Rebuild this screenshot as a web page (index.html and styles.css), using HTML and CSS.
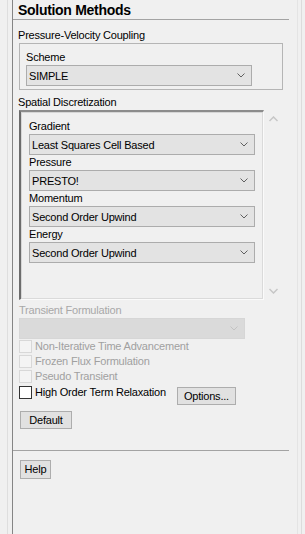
FILE: index.html
```html
<!DOCTYPE html>
<html>
<head lang="en">
    <meta charset="UTF-8">
    <title>Solution Methods</title>
    <link rel="stylesheet" href="styles.css">
</head>
<body>
    <div id="window">
        <div id="panel">
            <div class="title">Solution Methods</div>

            <div class="section">Pressure-Velocity Coupling</div>
            <div class="group">
                <div class="label">Scheme</div>
                <div class="select">
                    <span>SIMPLE</span>
                    <svg class="arrow" width="8" height="5" viewBox="0 0 8 5"><polyline points="0.5,0.5 4,4 7.5,0.5"/></svg>
                </div>
            </div>

            <div class="section second">Spatial Discretization</div>
            <div class="scroller">
                <div class="frame">
                    <div class="label">Gradient</div>
                    <div class="select">
                        <span>Least Squares Cell Based</span>
                        <svg class="arrow" width="8" height="5" viewBox="0 0 8 5"><polyline points="0.5,0.5 4,4 7.5,0.5"/></svg>
                    </div>
                    <div class="label">Pressure</div>
                    <div class="select">
                        <span>PRESTO!</span>
                        <svg class="arrow" width="8" height="5" viewBox="0 0 8 5"><polyline points="0.5,0.5 4,4 7.5,0.5"/></svg>
                    </div>
                    <div class="label">Momentum</div>
                    <div class="select">
                        <span>Second Order Upwind</span>
                        <svg class="arrow" width="8" height="5" viewBox="0 0 8 5"><polyline points="0.5,0.5 4,4 7.5,0.5"/></svg>
                    </div>
                    <div class="label">Energy</div>
                    <div class="select">
                        <span>Second Order Upwind</span>
                        <svg class="arrow" width="8" height="5" viewBox="0 0 8 5"><polyline points="0.5,0.5 4,4 7.5,0.5"/></svg>
                    </div>
                </div>
                <div class="scrollbar">
                    <svg width="9" height="6" viewBox="0 0 9 6"><polyline points="0.5,5 4.5,1 8.5,5"/></svg>
                    <svg width="9" height="6" viewBox="0 0 9 6"><polyline points="0.5,1 4.5,5 8.5,1"/></svg>
                </div>
            </div>

            <div class="section off">Transient Formulation</div>
            <div class="select off">
                <span></span>
                <svg class="arrow" width="8" height="5" viewBox="0 0 8 5"><polyline points="0.5,0.5 4,4 7.5,0.5"/></svg>
            </div>
            <div class="check off"><span class="box"></span>Non-Iterative Time Advancement</div>
            <div class="check off"><span class="box"></span>Frozen Flux Formulation</div>
            <div class="check off"><span class="box"></span>Pseudo Transient</div>
            <div class="check last">
                <span class="box"></span>High Order Term Relaxation
                <span class="button options">Options...</span>
            </div>
            <div class="button default">Default</div>

            <div class="footer">
                <div class="button help">Help</div>
            </div>
        </div>
        <div class="edge"></div>
    </div>
</body>
</html>
```

FILE: styles.css
```css
*{
    margin: 0;
    padding: 0;
    box-sizing: border-box;
}
body{
    background: #f0f0f0;
    color: #000;
    font-family: "Liberation Sans", Arial, sans-serif;
    font-size: 11px;
    letter-spacing: -0.2px;
}
#window{
    display: flex;
    width: 295px;
    height: 534px;
    margin-left: 7px;
    padding-left: 4px;
    border-left: 1px solid #dedede;
    border-right: 1px solid #dcdcdc;
}
#panel{
    width: 277px;
    border-left: 1px solid #858585;
    display: flex;
    flex-direction: column;
}
.edge{
    width: 9px;
    border-right: 1px solid #e4e4e4;
}
.title{
    padding: 1px 0 0 5px;
    line-height: 18px;
    font-size: 14px;
    font-weight: bold;
    letter-spacing: -0.3px;
    border-bottom: 1px solid #a3a3a3;
}
.section{
    margin: 8px 0 0 5px;
    line-height: 15px;
}
.section.second{
    margin-top: 5px;
}
.label{
    line-height: 15px;
}
.group{
    margin: 0 6px;
    padding: 6px 0 3px 6px;
    border: 1px solid #b5b5b5;
}
.select{
    width: 226px;
    height: 21px;
    padding: 0 6px 0 2px;
    display: flex;
    align-items: center;
    justify-content: space-between;
    background: #e3e3e3;
    border: 1px solid #acacac;
}
.arrow polyline{
    fill: none;
    stroke: #606060;
    stroke-width: 1;
}
.scroller{
    display: flex;
    margin: 0 0 0 6px;
}
.frame{
    width: 245px;
    height: 190px;
    padding: 7px 0 0 8px;
    border-style: solid;
    border-width: 2px 1px 1px 2px;
    border-color: #8c8c8c #fafafa #fafafa #6c6c6c;
    box-shadow: 1px 1px 0 #d6d6d6 inset, -1px -1px 0 #dadada inset;
}
.scrollbar{
    width: 19px;
    display: flex;
    flex-direction: column;
    justify-content: space-between;
    align-items: center;
    padding: 6px 0 6px 0;
}
.scrollbar polyline{
    fill: none;
    stroke: #c6c6c6;
    stroke-width: 1.5;
}
.section.off{
    margin: 3px 0 0 6px;
    color: #a8a8a8;
}
.select.off{
    margin-left: 6px;
    background: #dadada;
    border-color: #d6d6d6;
}
.select.off polyline{
    stroke: #c2c2c2;
}
.check{
    display: flex;
    align-items: center;
    height: 15px;
    margin-left: 6px;
    line-height: 15px;
}
.check .box{
    width: 13px;
    height: 13px;
    margin-right: 3px;
    border: 1px solid #333;
    background: #fff;
}
.check.off{
    color: #a0a0a0;
}
.check.off .box{
    border-color: #d8d8d8;
    background: #f4f4f4;
}
.check.last{
    height: 21px;
    align-items: flex-start;
    padding-top: 2px;
    line-height: 13px;
}
.button{
    height: 18px;
    line-height: 16px;
    text-align: center;
    background: #e1e1e1;
    border: 1px solid #adadad;
    color: #000;
}
.options{
    width: 59px;
    margin-left: 11px;
    margin-top: 1px;
}
.default{
    width: 52px;
    margin: 6px 0 0 7px;
}
.footer{
    margin-top: 21px;
    padding: 9px 0 0 7px;
    border-top: 1px solid #a3a3a3;
    flex: 1;
}
.help{
    width: 31px;
    height: 19px;
    line-height: 17px;
}
```
